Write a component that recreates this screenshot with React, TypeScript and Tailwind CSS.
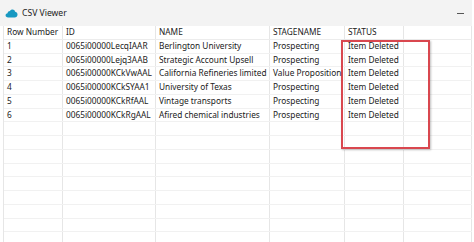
const COLS = [59, 93, 114, 75, 59, 68]

const HEADERS = ['Row Number', 'ID', 'NAME', 'STAGENAME', 'STATUS', '']

const ROWS = [
  ['1', '0065i00000LecqIAAR', 'Berlington University', 'Prospecting', 'Item Deleted'],
  ['2', '0065i00000Lejq3AAB', 'Strategic Account Upsell', 'Prospecting', 'Item Deleted'],
  ['3', '0065i00000KCkVwAAL', 'California Refineries limited', 'Value Proposition', 'Item Deleted'],
  ['4', '0065i00000KCkSYAA1', 'University of Texas', 'Prospecting', 'Item Deleted'],
  ['5', '0065i00000KCkRfAAL', 'Vintage transports', 'Prospecting', 'Item Deleted'],
  ['6', '0065i00000KCkRgAAL', 'Afired chemical industries', 'Prospecting', 'Item Deleted'],
]

const EMPTY_ROWS = 9

function Cloud() {
  return (
    <svg width="13" height="9" viewBox="0 0 14 10">
      <path
        d="M3.2 9.5C1.5 9.5 0.4 8.4 0.4 7 0.4 5.7 1.4 4.8 2.6 4.7 2.8 3.2 3.9 2.2 5.3 2.2 5.9 1.2 6.9 0.6 8 0.6 9.5 0.6 10.7 1.6 11 3 12.6 3.2 13.7 4.5 13.7 6.1 13.7 8 12.3 9.5 10.5 9.5Z"
        fill="#1798c1"
      />
    </svg>
  )
}

function Row({ cells, header }: { cells: string[]; header?: boolean }) {
  return (
    <div className={`flex h-[13.75px] ${header ? 'border-b border-[#ececec]' : 'border-b border-[#f1f1f1]'}`}>
      {COLS.map((w, i) => (
        <div
          key={i}
          style={{ width: w }}
          className="flex items-center whitespace-nowrap border-r border-[#e6e6e6] pl-[3px] leading-none"
        >
          <span className="relative z-10">{cells[i] ?? ''}</span>
        </div>
      ))}
    </div>
  )
}

export default function App() {
  return (
    <div
      className="relative h-[242px] w-[474px] overflow-hidden bg-white text-[8.3px] text-[#222]"
      style={{ fontFamily: '"Noto Sans", "Open Sans", sans-serif' }}
    >
      <div className="flex h-[26px] w-[472px] items-center bg-[#f3f3f3] pl-[5px]">
        <Cloud />
        <span className="ml-[4px] text-[8.6px] text-[#1a1a1a]">CSV Viewer</span>
        <span className="ml-auto mr-[8px] h-px w-[7px] bg-[#555]" />
      </div>

      <div className="ml-[3px] w-[469px] border-l border-[#e6e6e6]">
        <Row cells={HEADERS} header />
        {ROWS.map((r) => (
          <Row key={r[0]} cells={r} />
        ))}
        {Array.from({ length: EMPTY_ROWS }).map((_, i) => (
          <Row key={'e' + i} cells={[]} />
        ))}
      </div>

      <div className="absolute left-[341px] top-[40px] h-[109px] w-[89px] border-2 border-[#d9474f] shadow-[1px_1px_2px_rgba(0,0,0,0.25)]" />
    </div>
  )
}
